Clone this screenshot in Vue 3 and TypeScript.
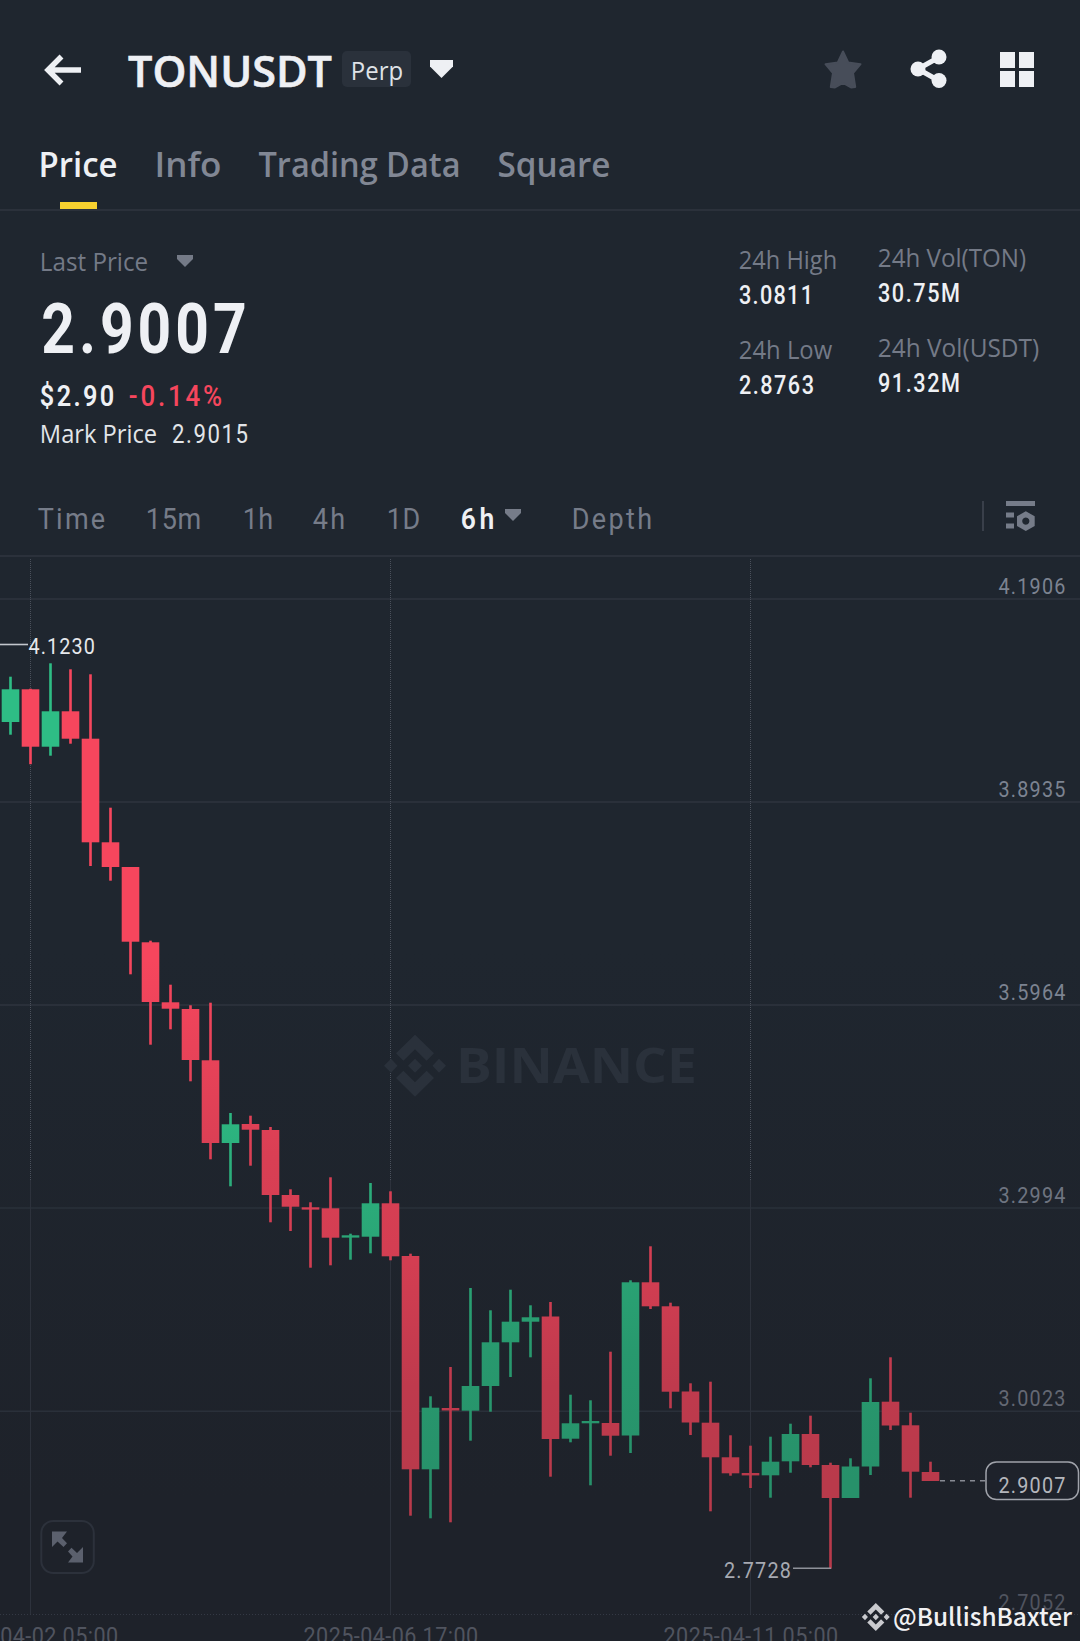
<script setup lang="ts">
import { h } from 'vue'

interface FitProps {
  text: string
  w: number
  cap: number
  squeeze?: number
}

/*
 * Text whose box is its cap height and whose advance is fitted to a fixed width.
 * With `squeeze`, glyphs are narrowed by that factor and the rest becomes letter spacing.
 */
const FitText = (props: FitProps) => {
  const size = props.cap / 0.714
  const s = props.squeeze ?? 1
  const bearing = size * 0.045 * s
  return h(
    'svg',
    { width: props.w, height: props.cap, overflow: 'visible', style: 'flex:none;display:block' },
    [
      h(
        'text',
        {
          transform: `translate(${-bearing} ${props.cap}) scale(${s} 1)`,
          'font-size': size,
          fill: 'currentColor',
          textLength: (props.w + bearing * 2) / s,
          lengthAdjust: props.squeeze ? 'spacing' : 'spacingAndGlyphs',
        },
        props.text,
      ),
    ],
  )
}
FitText.props = ['text', 'w', 'cap', 'squeeze']

const tabs = [
  { label: 'Price', w: 76, active: true },
  { label: 'Info', w: 64, active: false },
  { label: 'Trading Data', w: 199, active: false },
  { label: 'Square', w: 110, active: false },
]

const stats = [
  [
    { label: '24h High', lw: 96, value: '3.0811', vw: 72 },
    { label: '24h Low', lw: 91, value: '2.8763', vw: 73 },
  ],
  [
    { label: '24h Vol(TON)', lw: 146, value: '30.75M', vw: 80 },
    { label: '24h Vol(USDT)', lw: 159, value: '91.32M', vw: 80 },
  ],
]

const frames = [
  { label: 'Time', w: 65, gap: 43 },
  { label: '15m', w: 53, gap: 44 },
  { label: '1h', w: 28, gap: 42 },
  { label: '4h', w: 30, gap: 44 },
  { label: '1D', w: 31, gap: 43 },
]

type Side = 'g' | 'r'
// side, high, body top, body bottom, low
const candles: [Side, number, number, number, number][] = [
  ['g', 676.7, 689.3, 722, 734.7], ['r', 688.7, 689.3, 746.7, 764.2], ['g', 663.3, 711.3, 746.7, 755.7],
  ['r', 669.3, 711.3, 738.7, 743.7], ['r', 674.3, 738.7, 842.3, 866], ['r', 807.7, 842.3, 867, 880.7],
  ['r', 867, 867, 941.7, 974.3], ['r', 940.7, 942.3, 1002, 1044.7], ['r', 984.7, 1002.3, 1008.7, 1029.3],
  ['r', 1005.3, 1009, 1060, 1081.3], ['r', 1002.7, 1060.3, 1143, 1159.3], ['g', 1113, 1124.3, 1143, 1186.3],
  ['r', 1115.7, 1124, 1129.7, 1165.7], ['r', 1127, 1130, 1195, 1222.3], ['r', 1189.3, 1195, 1206.7, 1231],
  ['r', 1202.3, 1207.3, 1209.6, 1267.7], ['r', 1177.3, 1208.3, 1237.7, 1265.3], ['g', 1233.7, 1235.3, 1237.6, 1259.7],
  ['g', 1183, 1203.3, 1236.7, 1253.3], ['r', 1191.3, 1203.3, 1256.3, 1260.3], ['r', 1253.7, 1256, 1469.3, 1515.7],
  ['g', 1396.3, 1407.7, 1469.3, 1518.3], ['r', 1367, 1408, 1410.5, 1522.3], ['g', 1288, 1386, 1410.7, 1440.7],
  ['g', 1310.3, 1342.3, 1386, 1411.7], ['g', 1289.7, 1321.7, 1342.3, 1377], ['g', 1305.3, 1317.3, 1321.7, 1357.3],
  ['r', 1302, 1316.5, 1439, 1476.7], ['g', 1394.7, 1423.3, 1438.7, 1442.3], ['g', 1400.3, 1421, 1423.3, 1485.3],
  ['r', 1351.7, 1423, 1435.7, 1455.7], ['g', 1280.3, 1282.3, 1435.5, 1453], ['r', 1246.3, 1282.3, 1306.3, 1309],
  ['r', 1302.7, 1306.3, 1391.7, 1408.3], ['r', 1383.3, 1391.5, 1422.5, 1435], ['r', 1381.7, 1422.7, 1457.3, 1511.3],
  ['r', 1435.3, 1457.3, 1473.3, 1475.7], ['r', 1445.7, 1473, 1475.4, 1488], ['g', 1436.7, 1461.7, 1475.3, 1497.7],
  ['g', 1423.7, 1434, 1461.3, 1472.7], ['r', 1415.7, 1434, 1465, 1467.3], ['r', 1462.7, 1465, 1498, 1568.7],
  ['g', 1458.3, 1466.5, 1498, 1498], ['g', 1378.3, 1402, 1466.5, 1475], ['r', 1357.3, 1401.7, 1425.5, 1430],
  ['r', 1412.7, 1425.3, 1471.7, 1497.7], ['r', 1461.7, 1472, 1481, 1481],
]

const rows = [
  { y: 599, label: '4.1906', fill: '#7c8391' },
  { y: 802, label: '3.8935', fill: '#7c8391' },
  { y: 1005, label: '3.5964', fill: '#7c8391' },
  { y: 1208, label: '3.2994', fill: '#6e7480' },
  { y: 1411.3, label: '3.0023', fill: '#646873' },
]
const columns = [
  { x: 30.5, label: '2025-04-02 05:00' },
  { x: 390.5, label: '2025-04-06 17:00' },
  { x: 750.5, label: '2025-04-11 05:00' },
]
const diamond =
  'M0-31L19-12.4 11.6-5 0-16.5-11.6-5-19-12.4ZM0 31L19 12.4 11.6 5 0 16.5-11.6 5-19 12.4ZM0-7L7 0 0 7-7 0ZM-24-7L-17.500 0-24 7-31 0ZM24-7L31 0 24 7 17.500 0Z'
</script>

<template>
  <main class="screen">
    <header class="top">
      <svg class="back" width="37" height="32" viewBox="0 0 37 32">
        <path d="M17.500 2.500L4 16l13.500 13.500M4 16h33" fill="none" stroke="currentColor" stroke-width="5.500" />
      </svg>
      <FitText class="pair" text="TONUSDT" :w="200" :cap="31.5" />
      <div class="badge"><FitText text="Perp" :w="50" :cap="18" /></div>
      <svg class="switch" width="23" height="18" viewBox="0 0 23 18">
        <path d="M0 0h23v6.500L11.500 18 0 6.500Z" fill="currentColor" />
      </svg>
      <svg class="star" width="38" height="39" viewBox="0 0 38 39">
        <path
          d="M19 1.500L24.200 12.500 36.500 14.200 29 23 31.200 37 27 37.500 19 33 11 37.500 6.800 37 9 23 1.500 14.200 13.800 12.500Z"
          fill="currentColor" stroke="currentColor" stroke-width="2" stroke-linejoin="round"
        />
      </svg>
      <svg class="share" width="38" height="40" viewBox="0 0 38 40">
        <path d="M28.500 8.500L8 20l20.500 11.500" fill="none" stroke="currentColor" stroke-width="5" />
        <circle cx="29" cy="8" r="7.500" fill="currentColor" />
        <circle cx="8" cy="20" r="7.500" fill="currentColor" />
        <circle cx="29" cy="31.500" r="7.500" fill="currentColor" />
      </svg>
      <div class="grid-icon"><i /><i /><i /><i /></div>
    </header>

    <nav class="tabs">
      <div v-for="t in tabs" :key="t.label" class="tab" :class="{ active: t.active }">
        <FitText :text="t.label" :w="t.w" :cap="24" />
        <span v-if="t.active" class="marker" />
      </div>
    </nav>

    <section class="summary">
      <div class="quote">
        <div class="last">
          <FitText text="Last Price" :w="106" :cap="18" />
          <svg width="16" height="12" viewBox="0 0 16 12"><path d="M0 0h16v4L8 12 0 4Z" fill="currentColor" /></svg>
        </div>
        <FitText class="num price" text="2.9007" :w="200" :cap="50" :squeeze="0.84" />
        <div class="change num">
          <FitText text="$2.90" :w="72" :cap="21" :squeeze="0.86" />
          <FitText class="down" text="-0.14%" :w="91" :cap="21" :squeeze="0.88" />
        </div>
        <div class="mark">
          <FitText text="Mark Price" :w="115" :cap="18" />
          <FitText class="num" text="2.9015" :w="74" :cap="18" :squeeze="0.88" />
        </div>
      </div>
      <div class="stats">
        <div v-for="(col, i) in stats" :key="i" class="stat-col">
          <div v-for="s in col" :key="s.label" class="stat">
            <FitText :text="s.label" :w="s.lw" :cap="18" />
            <FitText class="num value" :text="s.value" :w="s.vw" :cap="18" :squeeze="0.86" />
          </div>
        </div>
      </div>
    </section>

    <nav class="frames">
      <FitText v-for="f in frames" :key="f.label" :text="f.label" :w="f.w" :cap="21" :squeeze="0.92" :style="{ marginRight: f.gap + 'px' }" />
      <div class="current">
        <FitText text="6h" :w="31" :cap="21" :squeeze="0.9" />
        <svg width="16" height="12" viewBox="0 0 16 12"><path d="M0 0h16v4L8 12 0 4Z" fill="currentColor" /></svg>
      </div>
      <FitText text="Depth" :w="78" :cap="21" :squeeze="0.92" />
      <span class="divider" />
      <svg class="settings" width="29" height="30" viewBox="0 0 29 30">
        <path d="M0 0h29v5H0zM0 11.500h8v5H0zM0 22.500h8v5H0z" fill="currentColor" />
        <path
          d="M19.800 10.200L28.700 15.200v9.800L19.800 30 11 25v-9.800ZM19.800 16.500a3.600 3.600 0 1 0 .01 0Z"
          fill="currentColor" fill-rule="evenodd"
        />
      </svg>
    </nav>

    <svg class="chart" width="1080" height="1084" viewBox="0 557 1080 1084">
      <defs>
        <linearGradient id="red" gradientUnits="userSpaceOnUse" x1="0" y1="960" x2="0" y2="1480">
          <stop offset="0" stop-color="#f6465d" />
          <stop offset=".38" stop-color="#d93f54" />
          <stop offset=".58" stop-color="#d33e52" />
          <stop offset=".82" stop-color="#bf3a4d" />
          <stop offset="1" stop-color="#b93a4b" />
        </linearGradient>
        <linearGradient id="green" gradientUnits="userSpaceOnUse" x1="0" y1="1050" x2="0" y2="1480">
          <stop offset="0" stop-color="#2ebd85" />
          <stop offset=".7" stop-color="#28996e" />
          <stop offset="1" stop-color="#27916a" />
        </linearGradient>
      </defs>

      <g class="lines">
        <path v-for="r in rows" :key="r.y" :d="`M0 ${r.y}H1080`" stroke="#2a303a" :stroke-width="r.y > 1100 ? 1.4 : 2" />
        <path d="M0 1614.500H1080" stroke="#343944" stroke-dasharray="1 2" />
        <template v-for="c in columns" :key="c.x">
          <path :d="`M${c.x} 559V1180`" stroke="#4a505b" stroke-dasharray="1 1" />
          <path :d="`M${c.x} 1180V1614`" stroke="#2d323c" />
        </template>
      </g>

      <g class="brand" fill="#2a313b">
        <path transform="translate(415 1065.700)" :d="diamond" />
        <text x="456" y="1083" textLength="241" lengthAdjust="spacingAndGlyphs">BINANCE</text>
      </g>

      <g v-for="(c, i) in candles" :key="i" :fill="c[0] === 'r' ? 'url(#red)' : 'url(#green)'">
        <rect :x="9.2 + i * 20" :y="c[1]" width="2.600" :height="c[4] - c[1]" />
        <rect :x="1.7 + i * 20" :y="c[2]" width="17.600" :height="c[3] - c[2]" />
      </g>

      <g class="axis">
        <text
          v-for="r in rows" :key="r.label"
          :transform="`translate(998.5 ${Math.round(r.y) - 5.3}) scale(.88 1)`" textLength="76" :fill="r.fill"
        >{{ r.label }}</text>
        <text transform="translate(998.500 1610) scale(.88 1)" textLength="76" fill="#50545f">2.7052</text>
        <text
          v-for="c in columns" :key="c.label" class="date"
          :transform="`translate(${c.x - 87} 1644) scale(.9 1)`" textLength="194" fill="#50545f"
        >{{ c.label }}</text>
        <path d="M0 644.500H28" stroke="#c3c6cd" stroke-width="1.600" />
        <text transform="translate(28.500 653.500) scale(.88 1)" textLength="75.500" fill="#e6e8ec">4.1230</text>
        <path d="M793 1568.300H831" stroke="#8e9199" stroke-width="1.600" />
        <text transform="translate(724 1577.500) scale(.88 1)" textLength="76" fill="#a6a9b1">2.7728</text>
        <path d="M940 1480.700H985" stroke="#878a93" stroke-width="1.500" stroke-dasharray="5 5" />
        <rect x="986" y="1462" width="92.500" height="37.500" rx="10.500" fill="#1e222b" stroke="#a0a3ab" stroke-width="1.500" />
        <text transform="translate(998.500 1492.700) scale(.88 1)" textLength="76" fill="#b4b6bc">2.9007</text>
      </g>

      <g class="expand">
        <rect x="41.300" y="1521" width="52.500" height="52" rx="12" fill="none" stroke="#2c313b" stroke-width="2" />
        <path d="M52 1531.500H67L62 1538 67 1543.300 63.500 1547 57.500 1541.500 52 1547ZM83 1562.500H68L72.500 1556.500 68 1551.500 71.500 1547.700 77 1553 83 1547Z" fill="#5b606d" />
      </g>

      <g class="author">
        <path transform="translate(875.800 1617) scale(.45)" :d="diamond" fill="#c9cace" />
        <text x="893" y="1625.500" textLength="179" lengthAdjust="spacingAndGlyphs">@BullishBaxter</text>
      </g>
    </svg>
  </main>
</template>

<style>
body {
  background: #1e222b;
}
</style>

<style scoped>
.screen {
  width: 1080px;
  height: 1641px;
  overflow: hidden;
  background: linear-gradient(#1f262f 0, #1f262f 950px, #1e222a 1500px);
  color: #eef0f4;
  font-family: 'Open Sans', 'Noto Sans', sans-serif;
}
.num {
  font-family: Roboto, 'Liberation Sans', sans-serif;
}
.top {
  display: flex;
  align-items: center;
  height: 141px;
  box-sizing: border-box;
  padding-left: 44px;
}
.back {
  margin: -2px 49px 0 0;
}
.pair {
  font-weight: 600;
  stroke: currentColor;
  stroke-width: 0.6px;
}
.badge {
  display: flex;
  align-items: center;
  justify-content: center;
  width: 69px;
  height: 36px;
  margin: -3px 19px 0 12px;
  padding-top: 3px;
  box-sizing: border-box;
  border-radius: 5px;
  background: #2a313b;
  color: #dfe2e7;
}
.switch {
  margin-top: -3px;
}
.star {
  margin: -3px 48px 0 371px;
  color: #474d59;
}
.share {
  margin: -3px 52px 0 0;
}
.grid-icon {
  display: grid;
  grid-template: 16px 16px / 15px 15px;
  gap: 3px 4px;
  margin-top: -3px;
}
.grid-icon i {
  background: #eef0f4;
}
.tabs {
  display: flex;
  gap: 40px;
  height: 68px;
  padding: 12px 0 0 40px;
  box-sizing: border-box;
  font-weight: 600;
  color: #818794;
}
.tabs + .summary {
  border-top: 2px solid #2b313b;
}
.tab {
  display: flex;
  flex-direction: column;
  align-items: center;
}
.active {
  color: #eef0f4;
}
.marker {
  width: 37px;
  height: 8px;
  margin-top: 25px;
  background: #f8d12f;
}
.summary {
  display: flex;
  justify-content: space-between;
  height: 274px;
  padding: 0 42px 0 41px;
  color: #747a87;
}
.quote {
  display: flex;
  flex-direction: column;
  padding-top: 41.500px;
}
.last {
  display: flex;
  gap: 30px;
}
.last svg + svg {
  margin-top: 2px;
}
.price {
  margin: 32px 0 32px 3px;
  font-weight: 700;
  color: #eef0f4;
}
.change {
  display: flex;
  gap: 17px;
  font-weight: 600;
  color: #eef0f4;
}
.down {
  font-weight: 500;
  color: #f6465d;
}
.mark {
  display: flex;
  gap: 17px;
  margin-top: 19px;
  color: #e2e5e9;
}
.stats {
  display: flex;
  gap: 43px;
  padding-top: 37.500px;
}
.stat-col {
  display: flex;
  flex-direction: column;
  gap: 37px;
}
.stat-col:first-child {
  padding-top: 2px;
}
.stat {
  display: flex;
  flex-direction: column;
  gap: 17px;
}
.value {
  color: #eef0f4;
  font-weight: 500;
}
.frames {
  display: flex;
  align-items: center;
  height: 72px;
  padding: 0 45px 4px 39px;
  box-sizing: border-box;
  border-bottom: 2px solid #2b313b;
  font-family: Roboto, sans-serif;
  color: #767c89;
}
.current {
  display: flex;
  gap: 12px;
  margin-right: 52px;
}
.current svg:first-child {
  color: #eef0f4;
  font-weight: 600;
}
.current svg:last-child {
  margin-top: 1px;
}
.divider {
  width: 2px;
  height: 30px;
  margin: -4px 22px 0 auto;
  background: #393f4a;
}
.settings {
  margin-top: -4px;
}
.chart {
  display: block;
}
.brand text {
  font: 700 49px 'Open Sans', sans-serif;
}
.axis {
  font: 400 22.500px Roboto, sans-serif;
}
.axis .date {
  font-size: 24px;
}
.author text {
  font: 500 24.500px 'Noto Sans CJK SC', sans-serif;
  fill: #f1f1f3;
}
</style>
